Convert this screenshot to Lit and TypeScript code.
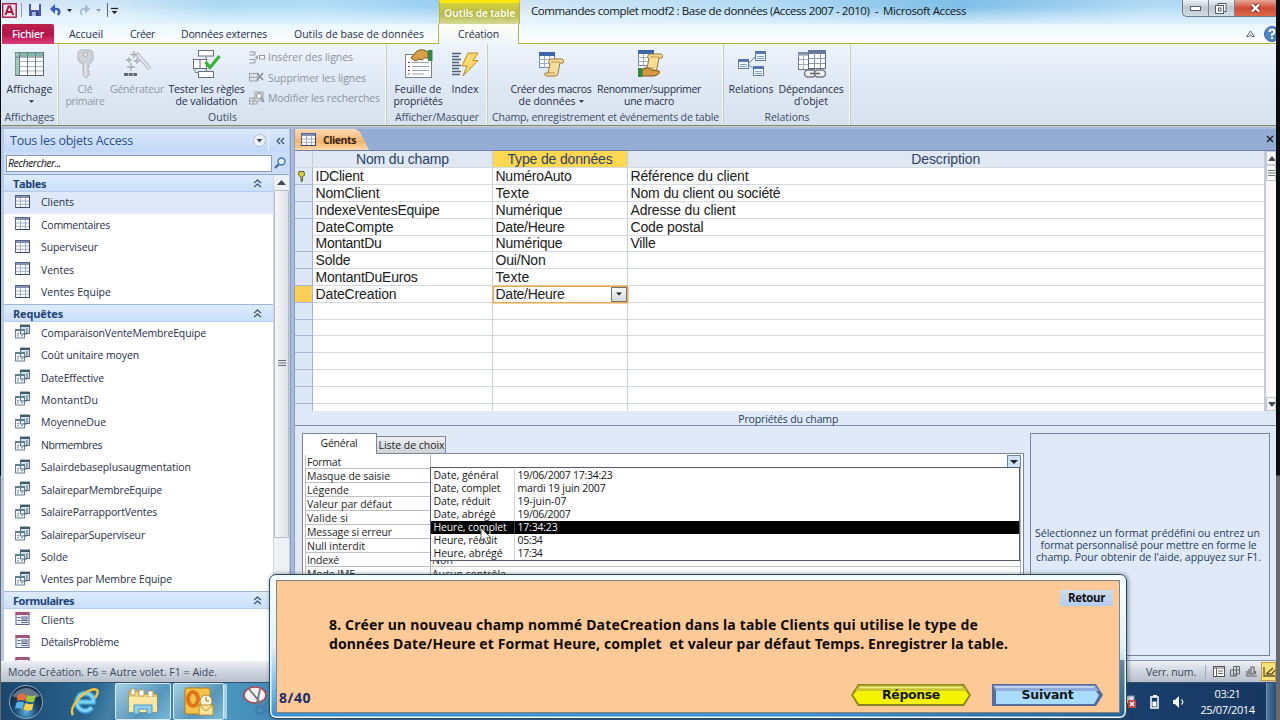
import { LitElement, html, css, svg } from "lit";
import { customElement, property } from "lit/decorators.js";
import { classMap } from "lit/directives/class-map.js";

/** A run of text tracked so that it spans a given width. */
@customElement("fit-text")
class FitText extends LitElement {
  @property({ type: Number }) w = 0;
  static styles = css`:host { display: inline-block; white-space: pre; }`;
  render() { return html`<slot></slot>`; }
  firstUpdated() {
    const n = (this.textContent || "").length;
    const natural = this.getBoundingClientRect().width;
    if (this.w && n && natural) this.style.letterSpacing = `${(this.w - natural) / n}px`;
  }
}

const t = (s: string, w: number) => html`<fit-text .w=${w}>${s}</fit-text>`;

const icon = (w: number, h: number, body: unknown) =>
  html`<svg width=${w} height=${h} viewBox="0 0 ${w} ${h}" fill="none">${body}</svg>`;

const grid = () => icon(15, 13, svg`
  <rect x=".5" y=".5" width="14" height="12" fill="#fdfdff" stroke="#56658a"/>
  <path d="M1 2H14" stroke="#8291b0" stroke-width="2"/>
  <path d="M5.500 3V12M10.500 3V12M1 6H14M1 9.300H14" stroke="#a3aec6"/>
  <path d="M14.500 1V12.500H1" stroke="#38486a"/>`);

const query = () => icon(15, 15, svg`
  <rect x="5.500" y="1" width="9" height="8.500" fill="#cfe1e6" stroke="#587083"/>
  <path d="M5 2H15" stroke="#3f5d68" stroke-width="2"/>
  <rect x=".5" y="5.500" width="9" height="8.500" fill="#f1f5f8" stroke="#6b7f90"/>
  <path d="M0 6H10" stroke="#5d8288" stroke-width="2"/>
  <path d="M2 9.500H4M2 11.800H4M6 11.800H8" stroke="#7c90a4"/>
  <path d="M5.500 7V10H12V4" stroke="#506a80"/>`);

const form = () => icon(14, 13, svg`
  <rect x=".5" y=".5" width="13" height="12" fill="#eef0fa" stroke="#5d6688"/>
  <path d="M0 1.500H14" stroke="#a8527a" stroke-width="3"/>
  <path d="M2 5.500H5M2 8.500H5" stroke="#56628c"/>
  <rect x="6.500" y="5" width="5" height="2" stroke="#56628c"/><rect x="6.500" y="8.500" width="5" height="2" stroke="#56628c"/>`);

const chevrons = () => icon(9, 9, svg`<path d="M1 4.200L4.500 1 8 4.200M1 8.200L4.500 5 8 8.200" stroke="#2b3f66" stroke-width="1.100"/>`);

const miniTable = (x: number, y: number) => svg`
  <rect x=${x + 0.5} y=${y + 0.5} width="10" height="9" fill="#f3f8ff" stroke="#5c7fb8"/>
  <path d="M${x} ${y + 1.5}h11" stroke="#5576b2" stroke-width="3"/>
  <path d="M${x + 2} ${y + 5.5}h7M${x + 2} ${y + 7.5}h7" stroke="#8aa4cc"/>`;

const scroll = (x: number, y: number) => svg`
  <path d="M${x + 4} ${y}h12q3 1 1 4l-3 0-2 10q0 3-3 3h-9q-2-1-1-3h3l2-9q-3-2 0-5z" fill="#f6dd9a" stroke="#9c7a34"/>
  <path d="M${x + 5} ${y + 3}h9M${x + 2} ${y + 14}h7" stroke="#bd9546"/>`;

const sheetTable = (x: number, y: number) => svg`
  <rect x=${x + 0.5} y=${y + 0.5} width="15" height="15" fill="#fff" stroke="#6d83b0"/>
  <path d="M${x} ${y + 2}h16" stroke="#3e66ad" stroke-width="4"/>
  <path d="M${x + 5.5} ${y + 4}v12M${x + 10.5} ${y + 4}v12M${x} ${y + 7.5}h16M${x} ${y + 11.5}h16" stroke="#9aabcc"/>`;

const big = {
  view: () => icon(29, 29, svg`
    <rect x=".5" y="3.500" width="28" height="23" fill="#fff" stroke="#5b6770"/>
    <path d="M1 5.500H28" stroke="#7fb7a8" stroke-width="4"/><path d="M2.500 4V26" stroke="#9ecabd" stroke-width="4"/>
    <path d="M5 12.500H28M5 17.500H28M5 22H28" stroke="#a8afb8"/><path d="M4.500 3V26M12.500 3V26M20.500 3V26M0 8H28" stroke="#6f7a84"/>`),
  key: () => icon(29, 29, svg`
    <path d="M9 1H19Q22 2 22 5V10Q21 14 18 15V18L16.500 20 18 22V26L15 29 12 26V15Q8 14 7 10V5Q7 2 9 1Z" fill="#cfd2d8" stroke="#b0b4bc"/>
    <circle cx="14.500" cy="5.500" r="2" fill="#f2f4f8" stroke="#a5a9b0"/><path d="M14.500 15V27" stroke="#eceef2"/>`),
  wand: () => icon(29, 29, svg`
    <path d="M13 4L27 20" stroke="#a9adb5" stroke-width="4"/><path d="M13 4L27 20" stroke="#e8eaef" stroke-width="2"/>
    <path d="M11 2V9M7.500 5.500H14.500M6 8V14M3 11H9M14 9V15M11 12H17M8 14V22M4 18H12" stroke="#a6abb3" stroke-width="1.300"/>
    <path d="M1 25.500H14" stroke="#63676e" stroke-width="3" stroke-dasharray="4 .7"/>`),
  rules: () => icon(29, 29, svg`
    <path d="M14 6V23M3 12.500V23.500H8" stroke="#7b828c"/>
    <rect x="6.500" y="1.500" width="15" height="5.500" fill="#fff" stroke="#666f7c"/>
    <rect x="6.500" y="22.500" width="15" height="6" fill="#fff" stroke="#666f7c"/>
    <rect x="1.500" y="10.500" width="13" height="9" fill="#fbfbfd" stroke="#666f7c"/><path d="M8 11V20" stroke="#666f7c"/>
    <path d="M13.500 13L18 18.500 27.500 7" stroke="#35b536" stroke-width="3.200"/>`),
  sheet: () => icon(29, 29, svg`
    <rect x="1.500" y="5.500" width="26" height="23" fill="#fdfdfd" stroke="#7d848e"/>
    <path d="M8 13.500H25M8 17.500H25M8 21.500H25M8 25H20" stroke="#9aa3b4"/><path d="M4 13.500H6M4 17.500H6M4 21.500H6M4 25H6" stroke="#555d6c"/>
    <path d="M7 9L13 2Q18 -1 24 3V9Q20 8 18 11L15 10 12 12 10 11Z" fill="#d8a148" stroke="#80571a"/>
    <rect x="24" y="1" width="4.500" height="11" fill="#2e8b45"/>`),
  index: () => icon(29, 29, svg`
    <path d="M1 4.500H10M1 7.500H8M1 10.500H10M1 13.500H8M1 16.500H10M1 19.500H8M1 22.500H10M1 25.500H9" stroke="#51607a" stroke-width="1.400"/>
    <path d="M17 4H27L22 11.500H27L12 27 16 17H11Z" fill="#ffd868" stroke="#b98a26"/>`),
  macro: () => icon(29, 29, svg`${sheetTable(2, 3)}${scroll(9, 10)}`),
  rename: () => icon(29, 29, svg`${sheetTable(3, 1)}${scroll(10, 5)}
    <path d="M7 21Q13 17 17 21L24 22Q26 25 19 27H7Z" fill="#d39a41" stroke="#80571a"/><rect x="3" y="19" width="4.500" height="9" fill="#2e8b45"/>`),
  relations: () => icon(29, 29, svg`<path d="M11 15L19 7M11 15L18 21" stroke="#6b7890"/>${miniTable(1, 10)}${miniTable(18, 2)}${miniTable(16, 17)}`),
  deps: () => icon(29, 29, svg`
    <rect x="1.500" y="3.500" width="16" height="17" fill="#fff" stroke="#6f7a8e"/><path d="M1 5H17" stroke="#8594b0" stroke-width="3"/>
    <path d="M6.500 5V20M2 10.500H17M2 15.500H17" stroke="#a2acbe"/>
    <rect x="11.500" y="1.500" width="17" height="18" fill="#fff" stroke="#5f6a80"/><path d="M11 3H29" stroke="#65769a" stroke-width="4"/>
    <path d="M17.500 4V19M23.500 4V19M12 9.500H28M12 14.500H28" stroke="#8b97ad"/>
    <rect x="7.500" y="21" width="11" height="7" rx="3.500" fill="#eee" stroke="#737a84" stroke-width="1.500"/><rect x="17.500" y="21" width="11" height="7" rx="3.500" fill="#eee" stroke="#737a84" stroke-width="1.500"/>
    <path d="M13 24.500H23" stroke="#5d646e" stroke-width="1.500"/>`),
};

type Btn = { cls: string; art: () => unknown; l1: [string, number]; l2?: [string, number]; off?: boolean; menu?: boolean };

const groups: { cls: string; label: [string, number]; buttons: Btn[]; small?: boolean }[] = [
  { cls: "g1", label: ["Affichages", 50], buttons: [{ cls: "b58", art: big.view, l1: ["Affichage", 46], menu: true }] },
  { cls: "g2", label: ["Outils", 29], small: true, buttons: [
    { cls: "b46", art: big.key, l1: ["Clé", 15], l2: ["primaire", 39], off: true },
    { cls: "b58", art: big.wand, l1: ["Générateur", 54], off: true },
    { cls: "b81", art: big.rules, l1: ["Tester les règles", 76], l2: ["de validation", 62] }] },
  { cls: "g3", label: ["Afficher/Masquer", 84], buttons: [
    { cls: "b52", art: big.sheet, l1: ["Feuille de", 47], l2: ["propriétés", 49] },
    { cls: "b42", art: big.index, l1: ["Index", 27] }] },
  { cls: "g4", label: ["Champ, enregistrement et événements de table", 227], buttons: [
    { cls: "b98", art: big.macro, l1: ["Créer des macros", 81], l2: ["de données", 57], menu: true },
    { cls: "b98", art: big.rename, l1: ["Renommer/supprimer", 104], l2: ["une macro", 50] }] },
  { cls: "g5", label: ["Relations", 45], buttons: [
    { cls: "b48", art: big.relations, l1: ["Relations", 45] },
    { cls: "b72", art: big.deps, l1: ["Dépendances", 65], l2: ["d'objet", 34] }] },
];

const nav = [
  { cls: "s1", title: ["Tables", 33], art: grid, items: [["Clients", 33], ["Commentaires", 69], ["Superviseur", 57], ["Ventes", 33], ["Ventes Equipe", 70]] },
  { cls: "s2", title: ["Requêtes", 50], art: query, items: [["ComparaisonVenteMembreEquipe", 165], ["Coût unitaire moyen", 98], ["DateEffective", 63], ["MontantDu", 57], ["MoyenneDue", 65], ["Nbrmembres", 61], ["Salairdebaseplusaugmentation", 150], ["SalaireparMembreEquipe", 121], ["SalaireParrapportVentes", 116], ["SalaireparSuperviseur", 104], ["Solde", 27], ["Ventes par Membre Equipe", 131]] },
  { cls: "s3", title: ["Formulaires", 61], art: form, items: [["Clients", 33], ["DétailsProblème", 78], ["", 0]] },
] as { cls: string; title: [string, number]; art: () => unknown; items: [string, number][] }[];

const fields: [string, number, string, number, string, number][] = [
  ["IDClient", 48, "NuméroAuto", 76, "Référence du client", 118],
  ["NomClient", 64, "Texte", 34, "Nom du client ou société", 150],
  ["IndexeVentesEquipe", 124, "Numérique", 67, "Adresse du client", 105],
  ["DateCompte", 78, "Date/Heure", 69, "Code postal", 73],
  ["MontantDu", 66, "Numérique", 67, "Ville", 25],
  ["Solde", 35, "Oui/Non", 50, "", 0],
  ["MontantDuEuros", 102, "Texte", 34, "", 0],
  ["DateCreation", 81, "Date/Heure", 69, "", 0],
  ...Array.from({ length: 7 }, () => ["", 0, "", 0, "", 0] as [string, number, string, number, string, number]),
];

const props: [string, number, string?, number?][] = [
  ["Format", 34], ["Masque de saisie", 83], ["Légende", 42], ["Valeur par défaut", 85], ["Valide si", 41],
  ["Message si erreur", 85], ["Null interdit", 58], ["Indexé", 32, "Non", 21], ["Mode IME", 48, "Aucun contrôle", 74],
];

const formats: [string, number, string, number][] = [
  ["Date, général", 65, "19/06/2007 17:34:23", 95], ["Date, complet", 67, "mardi 19 juin 2007", 88],
  ["Date, réduit", 57, "19-juin-07", 49], ["Date, abrégé", 62, "19/06/2007", 53],
  ["Heure, complet", 73, "17:34:23", 40], ["Heure, réduit", 64, "05:34", 25], ["Heure, abrégé", 69, "17:34", 25],
];

@customElement("app-root")
class AppRoot extends LitElement {
  static styles = css`
    :host { display: block; width: 1280px; height: 720px; overflow: hidden; font-family: "Open Sans", "Noto Sans", sans-serif; font-size: 10.500px; color: #1f3049; }
    * { box-sizing: border-box; }
    svg { display: block; flex: none; }
    .screen { position: relative; height: 720px; padding: 0 4.500px 0 1px; background: linear-gradient(#090d0f 475px, #67696c 476px); overflow: hidden; }
    .app { display: grid; grid-template-rows: 24px 20px 82px 535px 21px 38px; height: 720px; background: #cbd8ec; overflow: hidden; }
    .title { display: flex; align-items: flex-start; background: linear-gradient(transparent 30%, #e6f4fdcc), linear-gradient(90deg, transparent 8%, #73c5ef66 17%, #8ed0f577 25%, #5bb5e888 37%, transparent 40%, #8fcdf077 60%, #46a3dd99 75%, #80c4ee66 90%), linear-gradient(#cfe4f5, #eaf6fd); }
    .qat { display: flex; align-items: center; width: 438px; height: 20px; padding-left: 1px; }
    .m4 { margin-right: 4px; } .m5 { margin-right: 5px; } .m6 { margin-right: 6px; } .m8 { margin-right: 8px; }
    .bar { width: 1px; height: 14px; background: #92a2b5; margin-right: 6px; }
    .ctx { width: 81px; height: 24px; border-top: 3px solid #ffe800; background: linear-gradient(#d6d13d, #b9bd46 50%, #d5d998); color: #fffde0; font-weight: 700; font-size: 10.500px; line-height: 20px; text-align: center; border-left: 1px solid #b8b838; border-right: 1px solid #b8b838; text-shadow: 0 0 1px #76791f; }
    .name { flex: 1; padding-left: 11px; font-size: 11.500px; line-height: 22px; color: #101820; }
    .win { display: flex; height: 17px; border: 1px solid #6e7c8a; border-top: 0; border-right: 0; border-radius: 0 0 0 5px; overflow: hidden; background: linear-gradient(#eef3f7, #bcc6cf 50%, #d5dde4); }
    .win > div { display: grid; place-items: center; width: 26px; border-right: 1px solid #7b8792; }
    .win .close { width: 41px; border: 0; background: linear-gradient(#e9a79a, #cf4b35 50%, #da6a4a); }
    .tabs { display: flex; align-items: center; background: linear-gradient(#eaf6fd, #fff); border-bottom: 1px solid #b0b73f; }
    .tabs > div { height: 20px; line-height: 20px; text-align: center; }
    .file { width: 52px; margin-left: 1px; color: #fff; background: linear-gradient(#b8244f, #b5124a 50%, #dd3d77); border-radius: 2px 2px 0 0; font-weight: 600; }
    .ta { width: 64px; } .tb { width: 49px; } .tc { width: 114px; } .td { width: 156px; }
    .tabs .on { width: 81px; height: 21px; margin-left: 1px; background: linear-gradient(#fffff2, #eef4fc); border-left: 1px solid #b0b73f; border-right: 1px solid #b0b73f; margin-bottom: -1px; }
    .helpers { flex: 1; display: flex; justify-content: flex-end; align-items: center; gap: 9px; overflow: hidden; }
    .helpers svg:last-child { margin-right: -4px; }
    .ribbon { display: flex; background: linear-gradient(#eef4fc, #dfe8f5 50%, #d8e2ef); border-bottom: 1px solid #82876b; }
    .group { display: flex; flex-direction: column; border-right: 1px solid #c8cdb0; box-shadow: inset -1px 0 #f4f8fd; }
    .g1 { width: 58px; } .g2 { width: 328px; } .g3 { width: 101px; } .g4 { width: 236px; } .g5 { width: 127px; }
    .g2 .btns { padding-left: 3px; } .g3 .btns { padding-left: 5px; } .g4 .btns { padding-left: 14px; } .g5 .btns { padding-left: 3px; }
    .btns { display: flex; height: 64px; }
    .cap { height: 17px; line-height: 18px; text-align: center; color: #3c4c66; }
    .btn { display: flex; flex-direction: column; align-items: center; padding-top: 5px; line-height: 12px; white-space: nowrap; }
    .btn > div { height: 12px; display: flex; align-items: center; }
    .btn .l1 { margin-top: 5px; } .btn .dd { margin-left: 3px; }
    .b58 { width: 58px; } .b46 { width: 46px; } .b81 { width: 81px; } .b52 { width: 52px; } .b42 { width: 42px; } .b98 { width: 98px; flex: none; } .b48 { width: 48px; } .b72 { width: 72px; }
    .off { color: #92979f; }
    .smalls { padding: 3px 0 0 2px; }
    .smalls > div { display: flex; align-items: center; gap: 3px; height: 20.500px; color: #8d929b; }

    .work { display: grid; grid-template-columns: 290px 1fr; background: #a9bbdb; padding-top: 2px; border-top: 1px solid #c8cdc9; overflow: hidden; min-height: 0; }
    .side { padding-left: 3px; background: #b8cae8; border-right: 1px solid #8c9fc2; height: 532px; overflow: hidden; }
    .side-in { width: 285px; height: 532px; background: #fff; display: grid; grid-template-rows: 23px 23px 486px; overflow: hidden; }
    .shead { display: flex; align-items: center; background: linear-gradient(#dbe8fb, #c2d8f8); color: #28508a; font-size: 12.500px; padding-left: 6px; }
    .shead .grow { flex: 1; } .shead .vb { width: 1px; height: 20px; background: #e9f2ff; margin: 0 7px 0 2px; }
    .search { display: flex; align-items: center; background: #cbdef9; padding-left: 2px; border-bottom: 1px solid #8ea8d2; gap: 2px; }
    .box { width: 266px; height: 17px; line-height: 14px; border: 1px solid #8c9ab2; background: #fff; font-style: italic; color: #111; padding-left: 1px; }
    .tree { display: grid; grid-template-columns: 1fr 16px; height: 486px; overflow: hidden; }
    .list { overflow: hidden; }
    .sec { display: flex; align-items: center; justify-content: space-between; height: 17px; padding: 0 11px 0 9px; background: linear-gradient(#deebfd, #cadffc); border-bottom: 1px solid #b3cdf3; color: #1e4377; font-weight: 700; font-size: 11px; }
    .s2, .s3 { border-top: 1px solid #9db6da; height: 18px; }
    .item { display: flex; align-items: center; height: 22.450px; padding: 0 0 1.500px 11px; gap: 11px; }
    .item svg { width: 15px; margin-top: -2px; }
    .item.sel { background: #dfe9fa; }
    .vscroll { background: #eef0f4; border-left: 1px solid #d1d5dc; display: grid; grid-template-rows: 15px 348px 1fr; }
    .vscroll > div { display: grid; place-items: center; }
    .thumb { background: linear-gradient(90deg, #f7f7f8, #dddfe3); border: 1px solid #b8bcc4; border-radius: 1px; }

    .main { margin-left: 3px; display: grid; grid-template-rows: 22px 260px 15px 1fr; background: #dfe9f8; border-left: 1px solid #8e9fc0; height: 532px; min-width: 0; }
    .strip { display: flex; justify-content: space-between; background: #94add5; border-bottom: 1px solid #6d83ae; }
    .doc { display: flex; align-items: center; gap: 7px; width: 75px; padding-left: 6px; background: linear-gradient(#fbdcb7, #f5b26c 60%, #ffd9a8); clip-path: polygon(0 0, 60px 0, 65px 3px, 74px 100%, 0 100%); color: #352415; font-weight: 700; }
    .strip > svg { margin: 6px 2px 0 0; }
    .sheetwrap { display: grid; grid-template-columns: 1fr 11px; overflow: hidden; }
    .sheet { font-family: "Liberation Sans", Arial, sans-serif; font-size: 14px; background: #fff; overflow: hidden; border-right: 1px solid #c3cedd; }
    .row { display: grid; grid-template-columns: 18px 180px 135px 1fr; height: 16.850px; }
    .row > div { border-right: 1px solid #c9cfd8; border-bottom: 1px solid #d5dae1; padding-left: 2.500px; line-height: 16px; color: #202020; white-space: nowrap; display: flex; align-items: center; }
    .row .rs { background: #dce7f7; border-bottom-color: #a8b8d2; border-right-color: #a8b4c9; padding-left: 3px; }
    .row .rs.cur { background: #ffcf55; }
    .row .last { border-right: 0; }
    .row .edit { box-shadow: inset 0 0 0 1px #eda94d, 0 0 0 .5px #eda94d; border: 0; justify-content: space-between; padding: 0 1px 1px 2.500px; }
    .row .edit .drop { width: 16px; height: 15px; background: linear-gradient(#f8f8f8, #d5d9de); border: 1px solid #6d7683; display: grid; place-items: center; margin-top: 1px; }
    .drop svg, .combo svg { margin: 0; }
    .row.head { height: 17px; }
    .row.head > div { background: #dfe8f3; color: #2e3f66; justify-content: center; padding: 0; height: 17px; }
    .row.head .hl { background: #ffd751; }
    .hscr { background: #eef0f4; border-left: 1px solid #c5cbd6; display: grid; grid-template-rows: 14px 16px 1fr 14px; overflow: hidden; }
    .hscr > div { border: 1px solid #c3c7ce; background: #f9f9fa; padding: 4px 0 0 1px; overflow: hidden; }
    .hscr .rest { border: 0; }
    .plabel { line-height: 16px; text-align: center; border-bottom: 1px solid #8090aa; padding-left: 6px; color: #27405e; }
    .lower { display: grid; grid-template-columns: 722px 240px; column-gap: 6px; padding: 7px 0 4px 6.500px; border-bottom: 1px solid #8796b0; min-height: 0; }
    .pp { position: relative; display: grid; grid-template-rows: 20px 1fr; min-height: 0; }
    .ptabs { display: flex; align-items: flex-end; padding-top: 1px; }
    .ptabs .a { width: 75px; height: 21px; margin-bottom: -1px; background: #fff; border: 1px solid #7d8797; border-bottom: 0; line-height: 18px; text-align: center; color: #222; z-index: 1; }
    .ptabs .b { width: 69px; height: 17px; line-height: 17px; background: linear-gradient(#eef0f2, #cfd2d8); border: 1px solid #7d8797; border-left: 0; border-bottom: 0; padding-left: 2px; color: #222; white-space: nowrap; overflow: hidden; }
    .pbody { background: #fff; border: 1px solid #7d8797; padding: 1px 2px 0 2px; overflow: hidden; }
    .prow { display: grid; grid-template-columns: 125px 1fr; height: 14.050px; border-bottom: 1px solid #c0c0c0; border-left: 1px solid #c0c0c0; line-height: 14px; color: #1e1e1e; }
    .prow > div { border-right: 1px solid #b0b0b0; padding-left: 1.500px; height: 13px; white-space: nowrap; }
    .prow .btncell { display: flex; justify-content: flex-end; border-right: 0; }
    .combo { width: 14px; height: 13px; background: #cfe3f6; border: 1px solid #6585a8; display: grid; place-items: center; }
    .help { border: 1px solid #75859f; padding: 93px 0 0 0; text-align: center; line-height: 12.200px; color: #26405f; white-space: nowrap; text-indent: -2px; }
    .menu { position: absolute; left: 128px; top: 34px; width: 590px; height: 94px; background: #fff; border: 1px solid #525c6b; padding-top: 1px; }
    .opt { display: grid; grid-template-columns: 84px 1fr; height: 13.070px; line-height: 13px; color: #151515; }
    .opt > div { padding-left: 3px; white-space: nowrap; height: 13px; }
    .opt > div:first-child { border-right: 1px solid #d5d5d5; }
    .opt.hot { background: #000; color: #f6f6f6; }
    .opt.hot > div:first-child { border-right-color: #444; }
    .cursor { position: absolute; left: 178px; top: 94px; }

    .status { display: flex; align-items: center; background: linear-gradient(#eef0f4, #cfd5df 50%, #b8c0cd); color: #3b4557; padding-left: 7px; }
    .status .grow { flex: 1; } .status .vb { width: 1px; height: 14px; background: #9ea8b8; margin: 0 7px 0 9px; }
    .views { display: flex; gap: 4.500px; align-items: center; }
    .views .act { background: #ffe27c; border: 1px solid #c79b35; width: 15px; height: 19px; padding: 3px 1px; margin-left: -2px; overflow: hidden; }
    .task { display: flex; align-items: center; background: linear-gradient(115deg, transparent 90px, #a7d2e033 110px, transparent 130px), linear-gradient(90deg, #1c466e, #2b6a95 8%, #4a96c0 18%, #2b6998 30%, #1c4777 80%, #17365f); overflow: hidden; border-top: 1px solid #31516d; padding-left: 7px; }
    .tbtn { width: 56px; height: 37px; display: grid; place-items: center; border: 1px solid #d6ecf7; border-radius: 2px; background: linear-gradient(135deg, #a5d0e5, #5696bc 60%, #78b8d8); margin-right: 2px; }
    .tbtn.two { width: 51px; margin-right: 6px; box-shadow: 4px 0 0 -1px #a9d2e7; }
    .ie { margin: 0 16px 0 26px; }
    .grow { flex: 1; }
    .tray { display: flex; align-items: center; gap: 13px; margin-right: 14px; }
    .clock { display: flex; flex-direction: column; align-items: center; width: 56px; color: #fff; font-size: 11px; line-height: 16px; margin-right: 10px; }
    .desk { width: 10px; height: 37px; background: linear-gradient(90deg, #50789f, #264c77); border-left: 1px solid #7594b0; }

    .dialog { position: absolute; left: 269px; top: 573.500px; width: 858px; height: 145px; border: 1px solid #354653; border-radius: 7px; padding: 5px 6px; box-shadow: inset 0 0 0 1.500px #e9fbff, 1px 0 4px #33415a99; background: linear-gradient(90deg, transparent 60%, #16395988 100%) bottom / 100% 40% no-repeat, linear-gradient(#f7feff 8%, #dff2f9 50%, #6ebaf0 80%, #3b8bca); }
    .pad { display: flex; flex-direction: column; height: 133px; background: #fdca97; border: 1px solid #85837e; padding: 9px 6px 0 2px; }
    .ret { align-self: flex-end; width: 53px; height: 16px; text-align: center; background: linear-gradient(#cfdcec, #b1cdf0); color: #111; font: 700 11.500px/16px "Open Sans", sans-serif; }
    .ask { padding-left: 50px; margin-top: 9px; font-family: "Noto Sans", "Open Sans", sans-serif; font-weight: 700; font-size: 14px; line-height: 19.700px; color: #120b05; height: 50px; white-space: nowrap; }
    .foot { display: flex; align-items: center; height: 31px; margin-top: 15px; }
    .count { color: #1d2b66; font-family: "Noto Sans", "Open Sans", sans-serif; font-weight: 700; font-size: 14px; flex: 1; padding-top: 4px; }
    .pill { display: grid; width: 122px; height: 24px; margin-right: 19px; }
    .pill > * { grid-area: 1 / 1; }
    .pill.nx { width: 113px; margin-right: 9px; }
    .pill .cap2 { place-self: center; z-index: 1; padding-bottom: 1px; font: 700 12.500px/15px "DejaVu Sans", Verdana, sans-serif; color: #14181b; }
  `;

  private down(w = 5) { return html`<svg class="dd" width=${w} height=${w > 5 ? 4 : 3} viewBox="0 0 6 3"><path d="M0 0H6L3 3Z" fill="#222"/></svg>`; }

  private titleBar() {
    return html`<div class="title">
      <div class="qat">
        <svg class="m4" width="15" height="15"><rect x=".7" y=".7" width="13.500" height="13.500" fill="#f8e4ec" stroke="#a51848" stroke-width="1.400"/><path d="M3.500 12L6.500 3.500H8.200L11.200 12M5 9H10" fill="none" stroke="#a51848" stroke-width="2"/></svg>
        <div class="bar"></div>
        <svg class="m8" width="14" height="14"><path d="M1 1H13V13H1Z" fill="#4a55ae"/><rect x="3" y="1" width="8" height="6" fill="#e7ecfa"/><rect x="4" y="9" width="6" height="4" fill="#aeb9de"/><rect x="8" y="9" width="2" height="4" fill="#303a80"/></svg>
        <svg class="m5" width="12" height="12"><path d="M2 5H7Q11 6 8 11" fill="none" stroke="#3b5cb8" stroke-width="2.500"/><path d="M0 5L5 0V10Z" fill="#3b5cb8"/></svg>
        <svg class="m6" width="5" height="3"><path d="M0 0H5L2.500 3Z" fill="#222"/></svg>
        <svg class="m6" width="12" height="12"><path d="M10 5H5Q1 6 4 11" fill="none" stroke="#a9bccd" stroke-width="2"/><path d="M12 5L7 0V10Z" fill="#a9bccd"/></svg>
        <svg class="m6" width="5" height="3"><path d="M0 0H5L2.500 3Z" fill="#8fa2b4"/></svg>
        <svg width="12" height="14"><path d="M.5 0V14" stroke="#566778"/><path d="M4 5.500H11" stroke="#222" stroke-width="1.300"/><path d="M4.500 8H10.500L7.500 11Z" fill="#222"/></svg>
      </div>
      <div class="ctx">${t("Outils de table", 71)}</div>
      <div class="name">${t("Commandes complet modf2 : Base de données (Access 2007 - 2010)  -  Microsoft Access", 435)}</div>
      <div class="win">
        <div><svg width="11" height="5"><rect x=".5" y=".5" width="10" height="4" fill="#fff" stroke="#55606b"/></svg></div>
        <div><svg width="12" height="11"><rect x="3" y=".5" width="8" height="8" fill="#fff" stroke="#55606b"/><rect x=".5" y="2.500" width="8" height="8" fill="#fff" stroke="#55606b"/><rect x="3.500" y="5" width="2.500" height="3" fill="none" stroke="#55606b"/></svg></div>
        <div class="close"><svg width="11" height="10"><path d="M2 1.500L9 8.500M9 1.500L2 8.500" stroke="#7a2b20" stroke-width="4"/><path d="M2 1.500L9 8.500M9 1.500L2 8.500" stroke="#fff" stroke-width="2.400"/></svg></div>
      </div>
    </div>
    <div class="tabs">
      <div class="file">${t("Fichier", 32)}</div>
      <div class="ta">${t("Accueil", 34)}</div><div class="tb">${t("Créer", 25)}</div><div class="tc">${t("Données externes", 86)}</div><div class="td">${t("Outils de base de données", 130)}</div>
      <div class="on">${t("Création", 41)}</div>
      <div class="helpers">
        <svg width="9" height="8"><path d="M.7 6.500L4.500 1 8.300 6.500H6L4.500 4.500 3 6.500Z" fill="#fff" stroke="#59636e"/></svg>
        <svg width="16" height="16"><circle cx="8" cy="8" r="7.500" fill="#4e83c9" stroke="#3563a2"/><path d="M5.500 6Q5.500 3.500 8 3.500T10.500 6Q10.500 7.500 8 8.500V10M8 11V13" fill="none" stroke="#fff" stroke-width="2"/></svg>
      </div>
    </div>`;
  }

  private ribbon() {
    return html`<div class="ribbon">${groups.map(g => html`<div class="group ${g.cls}">
      <div class="btns">${g.buttons.map(b => html`<div class="btn ${b.cls} ${b.off ? "off" : ""}">
        ${b.art()}
        <div class="l1">${t(...b.l1)}</div>
        <div>${b.l2 ? t(...b.l2) : ""}${b.menu ? this.down() : ""}</div>
      </div>`)}
      ${g.small ? html`<div class="smalls">
        <div><svg width="16" height="13"><path d="M.5 1H6V4H.5M.5 8.500H6V12H.5M6 6.500H9M8 4.500V8.500" fill="none" stroke="#8f959e"/><rect x="10.500" y="4.500" width="5" height="3.500" fill="#fff" stroke="#8f959e"/></svg>${t("Insérer des lignes", 85)}</div>
        <div><svg width="16" height="13"><path d="M.5 2.500H9V10H.5ZM.5 6.300H9" fill="#e1e4e9" stroke="#989da6"/><path d="M8 2L14 9M14 2L8 9" stroke="#8b9098" stroke-width="1.600"/></svg>${t("Supprimer les lignes", 98)}</div>
        <div><svg width="16" height="14"><path d="M.5 7H8V13H.5ZM4 7V13M.5 10H8" fill="#eceef1" stroke="#989da6"/><rect x="6" y="1" width="8" height="9" fill="#dcdfe4" stroke="#a3a7ae"/><circle cx="10" cy="5" r="2.800" fill="#f6f6f8" stroke="#8c9199"/><path d="M12 7L15 11" stroke="#8c9199" stroke-width="1.500"/></svg>${t("Modifier les recherches", 112)}</div>
      </div>` : ""}</div>
      <div class="cap">${t(...g.label)}</div>
    </div>`)}</div>`;
  }

  private side() {
    return html`<div class="side"><div class="side-in">
      <div class="shead">${t("Tous les objets Access", 123)}<div class="grow"></div>
        <svg width="13" height="13"><circle cx="6.500" cy="6.500" r="6" fill="#edf3fc" stroke="#aebdd5"/><path d="M3.500 5H9.500L6.500 8.500Z" fill="#3c4a60"/></svg>
        <div class="vb"></div>
        <svg width="13" height="8"><path d="M4 1L1 4 4 7M8 1L5 4 8 7" fill="none" stroke="#2e4870" stroke-width="1.100"/></svg></div>
      <div class="search"><div class="box">${t("Rechercher...", 53)}</div>
        <svg width="12" height="12"><path d="M1 11L5 7" stroke="#49648f" stroke-width="2.200"/><circle cx="7.500" cy="4.500" r="3.500" fill="#e8f6ff" stroke="#3778b6" stroke-width="1.400"/></svg></div>
      <div class="tree"><div class="list">${nav.map((s, i) => html`<div class="sec ${s.cls}">${t(...s.title)}${chevrons()}</div>
        ${s.items.map((it, j) => html`<div class=${classMap({ item: true, sel: i === 0 && j === 0 })}>${s.art()}${it[0] ? t(...it) : ""}</div>`)}`)}</div>
        <div class="vscroll">
          <div><svg width="9" height="5"><path d="M0 5H9L4.500 0Z" fill="#424b55"/></svg></div>
          <div class="thumb"><svg width="8" height="8"><path d="M0 .5H8M0 3H8M0 5.500H8" stroke="#6b7179"/></svg></div><div></div>
        </div></div>
    </div></div>`;
  }

  private main() {
    return html`<div class="main">
      <div class="strip"><div class="doc">${grid()}${t("Clients", 33)}</div>
        <svg width="8" height="8"><path d="M1 1L7 7M7 1L1 7" stroke="#1a1a1a" stroke-width="1.300"/></svg></div>
      <div class="sheetwrap">
        <div class="sheet">
          <div class="row head"><div></div><div>${t("Nom du champ", 93)}</div><div class="hl">${t("Type de données", 105)}</div><div class="last">${t("Description", 69)}</div></div>
          ${fields.map((f, i) => html`<div class="row">
            <div class=${classMap({ rs: true, cur: i === 7 })}>${i === 0 ? html`<svg width="7" height="11"><path d="M1 .5H6L6.500 4 4.500 6V10L3 10.500V6L.5 4Z" fill="#d9cf3d" stroke="#5f6020"/></svg>` : ""}</div>
            <div>${f[0] ? t(f[0], f[1]) : ""}</div>
            <div class=${classMap({ edit: i === 7 })}>${f[2] ? t(f[2], f[3]) : ""}${i === 7 ? html`<div class="drop">${this.down(6)}</div>` : ""}</div>
            <div class="last">${f[4] ? t(f[4], f[5]) : ""}</div></div>`)}
        </div>
        <div class="hscr">
          <div><svg width="8" height="5"><path d="M0 5H8L4 0Z" fill="#424b55"/></svg></div>
          <div><svg width="8" height="8"><path d="M0 .5H8M0 3H8M0 5.500H8" stroke="#777"/></svg></div>
          <div class="rest"></div>
          <div><svg width="8" height="5"><path d="M0 0H8L4 5Z" fill="#424b55"/></svg></div>
        </div>
      </div>
      <div class="plabel">${t("Propriétés du champ", 100)}</div>
      <div class="lower">
        <div class="pp">
          <div class="ptabs"><div class="a">${t("Général", 37)}</div><div class="b">${t("Liste de choix", 66)}</div></div>
          <div class="pbody">${props.map((p, i) => html`<div class="prow"><div>${t(p[0], p[1])}</div>
            <div class=${classMap({ btncell: i === 0 })}>${p[2] ? t(p[2], p[3]!) : ""}${i === 0 ? html`<div class="combo">${this.down(8)}</div>` : ""}</div></div>`)}</div>
          <div class="menu">${formats.map((f, i) => html`<div class=${classMap({ opt: true, hot: i === 4 })}><div>${t(f[0], f[1])}</div><div>${t(f[2], f[3])}</div></div>`)}</div>
          <svg class="cursor" width="13" height="19"><path d="M1 1V14L4 11.500 6.500 17 9 16 6.800 10.800H11Z" fill="#fff" stroke="#555"/></svg>
        </div>
        <div class="help">${t("Sélectionnez un format prédéfini ou entrez un", 223)}<br>${t("format personnalisé pour mettre en forme le", 214)}<br>${t("champ. Pour obtenir de l'aide, appuyez sur F1.", 223)}</div>
      </div>
    </div>`;
  }

  private bottom() {
    return html`<div class="status">${t("Mode Création. F6 = Autre volet. F1 = Aide.", 209)}<div class="grow"></div>${t("Verr. num.", 50)}<div class="vb"></div>
      <div class="views">
        <svg width="12" height="11"><rect x=".5" y=".5" width="11" height="10" fill="#fff" stroke="#555"/><path d="M1 2H11M3.500 2V10M5 5H10M5 7.500H10" stroke="#666"/></svg>
        <svg width="12" height="11"><path d="M3.500 .5H9.500V8H3.500ZM6.500 .5V10M.5 4H9.500M.5 4V10H7M3.500 4V10" fill="none" stroke="#666"/></svg>
        <svg width="12" height="11"><path d="M1 5V10H11M3 3V8H8V1H5V8M9.500 5V8" fill="none" stroke="#666" stroke-width="1.200"/></svg>
        <div class="act"><svg width="12" height="12"><path d="M1 1V10H12M3 8L10 2M4 8L9 8 12 4" fill="none" stroke="#635527" stroke-width="1.300"/></svg></div>
      </div></div>
    <div class="task">
      <svg width="36" height="36"><defs><radialGradient id="o" cy=".8"><stop offset="0" stop-color="#5bb2dc"/><stop offset=".6" stop-color="#1e527d"/><stop offset="1" stop-color="#16334f"/></radialGradient></defs>
        <circle cx="18" cy="18" r="16.500" fill="url(#o)" stroke="#8ea9bd"/><path d="M4 12Q18 -4 32 12Q18 19 4 12" fill="#ffffff55"/>
        <path d="M10 11Q14 8 18 11L16.500 17Q13 15 9 17Z" fill="#f26a35"/><path d="M19 11Q23 13 28 11L26 18Q22 19 17.500 17Z" fill="#9bcb3c"/><path d="M8.500 18.500Q12 16.500 16 18.500L14.500 25Q11 23 7 25Z" fill="#54b6e8"/><path d="M17.300 19Q21 21 25.500 19.500L24 26Q19 27.500 15.500 25.500Z" fill="#fbd143"/></svg>
      <svg class="ie" width="29" height="30"><path d="M22 20.500Q15 27.500 8.500 20.500Q4.500 14 10 8Q18 4 22.500 10Q24 12.500 23.500 15H9" fill="none" stroke="#3f9fd6" stroke-width="5.500"/><path d="M22 20.500Q15 27 8.500 20.500Q5 14 10 8Q18 4 22.500 10Q24 12.500 23.500 15H9" fill="none" stroke="#7fd3f5" stroke-width="3"/><path d="M3 28Q-1 22 10 10Q22 0 27 3Q29 6 25 11" fill="none" stroke="#f0c33b" stroke-width="2.500"/></svg>
      <div class="tbtn"><svg width="32" height="27"><path d="M2 3H12L14 6H30V24H2Z" fill="#efd47c" stroke="#b0913e"/><path d="M4 1H8V7H4ZM12 2H17V8H12ZM21 3H26V9H21Z" fill="#fff" stroke="#bf9a55"/><path d="M2 9H30V24H2Z" fill="#f9e7a2"/><path d="M7 26V17H25V26H20V21H12V26Z" fill="#8ed0ef" stroke="#4f98c4"/></svg></div>
      <div class="tbtn two"><svg width="31" height="30"><rect x="2" y="1" width="25" height="26" rx="2" fill="#f4c34c" stroke="#b67c19"/><ellipse cx="10" cy="12" rx="5" ry="7" fill="none" stroke="#e27317" stroke-width="4"/><circle cx="23" cy="14" r="6" fill="#f8f3dc" stroke="#b98a2a"/><path d="M23 10V14H26" fill="none" stroke="#a56c13"/><rect x="16" y="18" width="14" height="10" fill="#fbe29c" stroke="#c08d26"/><path d="M16 18L23 24 30 18" fill="none" stroke="#c08d26"/></svg></div>
      <svg width="40" height="34"><ellipse cx="25" cy="10" rx="11" ry="8" fill="#f7f1f3" stroke="#af4453" stroke-width="1.500"/><path d="M19 4L34 22M30 4L27 18" stroke="#6e7a82" stroke-width="1.800"/><circle cx="30" cy="25" r="4" fill="none" stroke="#3f7fae" stroke-width="2.500"/><circle cx="38" cy="22" r="4" fill="none" stroke="#3f7fae" stroke-width="2.500"/></svg>
      <div class="grow"></div>
      <div class="tray">
        <svg width="14" height="15"><rect x="1" y="2" width="10" height="7" fill="#dfe8f0" stroke="#8796a8"/><rect x="5" y="6" width="8" height="8" fill="#d5413d"/><path d="M7 8L11 12M11 8L7 12" stroke="#fff" stroke-width="1.500"/></svg>
        <svg width="9" height="14"><rect x="3" y="0" width="4" height="2" fill="#fff"/><rect x="1" y="2" width="7" height="11" fill="#183a60" stroke="#fff" stroke-width="1.500"/><rect x="2.500" y="6.500" width="4" height="5" fill="#fff"/></svg>
        <svg width="14" height="14"><path d="M1 5H3L7 1V13L3 9H1Z" fill="#fff"/><path d="M9.500 4.500Q12 7 9.500 9.500" fill="none" stroke="#dbe7f3" stroke-width="1.300"/></svg>
      </div>
      <div class="clock">${t("03:21", 26)}${t("25/07/2014", 54)}</div>
      <div class="desk"></div>
    </div>`;
  }

  private dialog() {
    return html`<div class="dialog"><div class="pad">
      <div class="ret">${t("Retour", 37)}</div>
      <div class="ask">${t("8. Créer un nouveau champ nommé DateCreation dans la table Clients qui utilise le type de", 649)}<br>${t("données Date/Heure et Format Heure, complet  et valeur par défaut Temps. Enregistrer la table.", 679)}</div>
      <div class="foot"><div class="count">${t("8/40", 32)}</div>
        <div class="pill"><svg width="122" height="24"><path d="M1 12L8 1H114L121 12 114 23H8Z" fill="#8a8420"/><path d="M3 12L9 5H113L119 12 113 21H9Z" fill="#f4f400"/><path d="M9 2.500H113L117 8H5Z" fill="#c9c52e"/><path d="M10 4.500H112" stroke="#eeee9a" stroke-width="1.500"/></svg><div class="cap2">${t("Réponse", 58)}</div></div>
        <div class="pill nx"><svg width="113" height="24"><path d="M1 1H105L112 12 105 23H1Z" fill="#536d9f"/><path d="M5 6H103L108 12 103 21H5Z" fill="#a9dcfb"/><path d="M2 2.500H104L108 8H5Z" fill="#8facda"/><path d="M4 4H103" stroke="#d2e3f7" stroke-width="1.500"/></svg><div class="cap2">${t("Suivant", 52)}</div></div>
      </div>
    </div></div>`;
  }

  render() {
    return html`<div class="screen"><div class="app">
      ${this.titleBar()}${this.ribbon()}
      <div class="work">${this.side()}${this.main()}</div>
      ${this.bottom()}
    </div>${this.dialog()}</div>`;
  }
}
